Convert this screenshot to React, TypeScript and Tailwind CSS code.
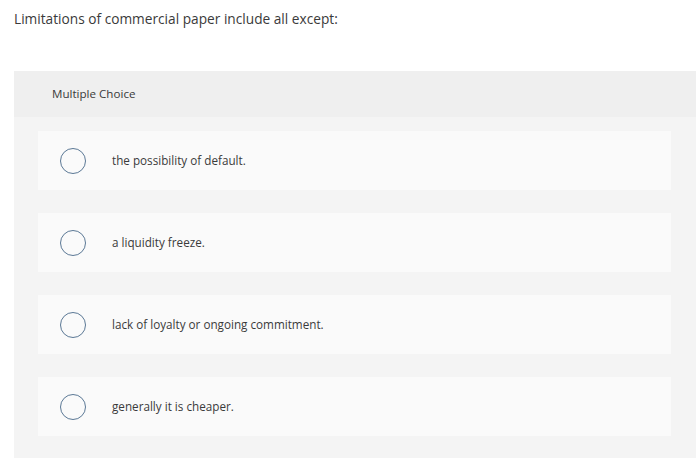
const options = [
  "the possibility of default.",
  "a liquidity freeze.",
  "lack of loyalty or ongoing commitment.",
  "generally it is cheaper.",
];

export default function App() {
  return (
    <div className="h-[464px] w-[700px] bg-white pt-[10px] font-['Open_Sans','Liberation_Sans',sans-serif] text-[#3a3a3a]">
      <h1 className="pl-[14px] text-[13.7px] leading-[18px]">
        Limitations of commercial paper include all except:
      </h1>

      <div className="ml-[14px] mr-[4px] mt-[43px] bg-[#f4f4f4]">
        {/* Header */}
        <div className="flex h-[46px] items-center bg-[#efefef] pl-[38px] text-[11.6px]">
          Multiple Choice
        </div>

        {/* Options */}
        <div className="flex flex-col gap-[23px] pb-[22px] pl-[24px] pr-[25px] pt-[14px]">
          {options.map((opt) => (
            <div key={opt} className="flex h-[59px] items-center bg-[#fafafa]">
              <span className="ml-[22px] h-[26px] w-[26px] shrink-0 rounded-full border-[1.5px] border-[#5b7895]" />
              <span className="ml-[26px] text-[11.7px]">{opt}</span>
            </div>
          ))}
        </div>
      </div>
    </div>
  );
}
